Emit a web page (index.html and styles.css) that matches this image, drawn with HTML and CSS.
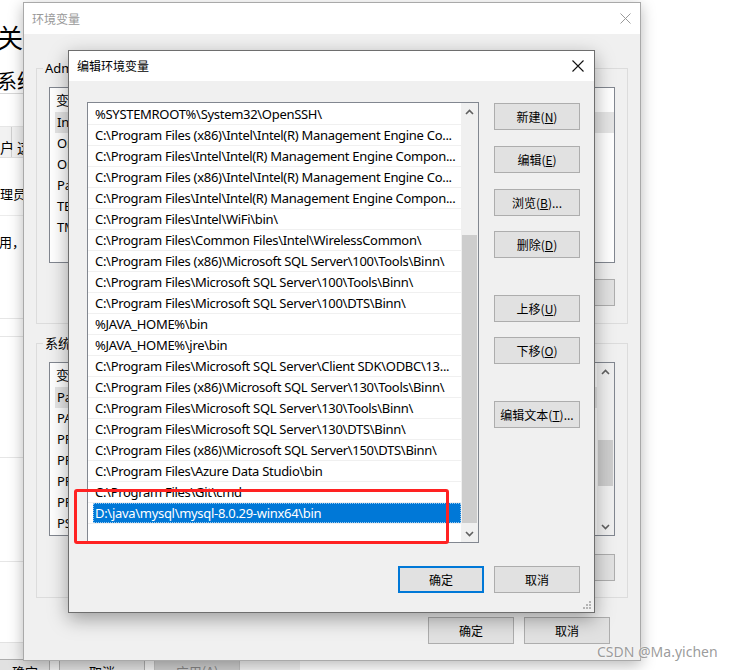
FILE: index.html
```html
<!DOCTYPE html>
<html lang="zh-CN">
<head>
<meta charset="utf-8">
<title>编辑环境变量</title>
<link rel="stylesheet" href="styles.css">
</head>
<body>
<div class="desk">

  <!-- background settings page -->
  <div class="page">
    <div class="pg-title">关于</div>
    <div class="pg-sub">系统</div>
    <div class="pg-tabs"><span class="tab t1">用户</span><span class="tab t2">这</span></div>
    <div class="pg-line1">管理员登录</div>
    <div class="pg-para">使用，以</div>
    <div class="pg-sep s1"></div>
    <div class="pg-sep s2"></div>
    <div class="pg-sep s3"></div>
    <div class="pg-sep s4"></div>
    <div class="pg-foot"></div>
    <div class="pg-btns">
      <span class="pbtn pb1">确定</span><span class="pbtn pb2">取消</span><span class="pbtn pb3">应用(A)</span>
    </div>
  </div>

  <!-- outer dialog -->
  <div class="win outer">
    <div class="titlebar inactive">
      <span class="ttl">环境变量</span>
      <svg class="close" width="11" height="11" viewBox="0 0 11 11"><path d="M0.5 0.5L10.5 10.5M10.5 0.5L0.5 10.5" stroke="#9a9a9a" stroke-width="1"/></svg>
    </div>
    <div class="obody">
      <fieldset class="grp g1">
        <legend>Administrator 的用户变量(U)</legend>
        <div class="olist l1">
          <div class="ohead">变量</div>
          <div class="orow hl">IntelliJ IDEA</div>
          <div class="orow">OneDrive</div>
          <div class="orow">OneDriveConsumer</div>
          <div class="orow">Path</div>
          <div class="orow">TEMP</div>
          <div class="orow">TMP</div>
        </div>
        <div class="obtns"><span class="btn">新建(N)...</span><span class="btn">编辑(E)...</span><span class="btn">删除(D)</span></div>
      </fieldset>
      <fieldset class="grp g2">
        <legend>系统变量(S)</legend>
        <div class="olist l2">
          <div class="ocol">
            <div class="ohead">变量</div>
            <div class="orow hl">Path</div>
            <div class="orow">PATHEXT</div>
            <div class="orow">PROCESSOR_ARCHITECTURE</div>
            <div class="orow">PROCESSOR_IDENTIFIER</div>
            <div class="orow">PROCESSOR_LEVEL</div>
            <div class="orow">PROCESSOR_REVISION</div>
            <div class="orow">PSModulePath</div>
          </div>
          <div class="vscroll sb2">
            <div class="arrow"><svg width="9" height="6" viewBox="0 0 9 6"><path d="M1 5L4.5 1.5L8 5" fill="none" stroke="#606060" stroke-width="1.6"/></svg></div>
            <div class="track"><div class="thumb"></div></div>
            <div class="arrow"><svg width="9" height="6" viewBox="0 0 9 6"><path d="M1 1L4.5 4.5L8 1" fill="none" stroke="#606060" stroke-width="1.6"/></svg></div>
          </div>
        </div>
        <div class="obtns"><span class="btn">新建(W)...</span><span class="btn">编辑(I)...</span><span class="btn">删除(L)</span></div>
      </fieldset>
      <div class="ofoot"><span class="btn fb">确定</span><span class="btn fb">取消</span></div>
    </div>
  </div>

  <!-- inner dialog -->
  <div class="win inner">
    <div class="titlebar">
      <span class="ttl">编辑环境变量</span>
      <svg class="close" width="12" height="12" viewBox="0 0 12 12"><path d="M0.5 0.5L11.5 11.5M11.5 0.5L0.5 11.5" stroke="#111" stroke-width="1.1"/></svg>
    </div>
    <div class="ibody">
      <div class="imain">
        <div class="ilist">
          <div class="irows">
            <div class="irow"><span class="cell">%SYSTEMROOT%\System32\OpenSSH\</span></div>
            <div class="irow"><span class="cell">C:\Program Files (x86)\Intel\Intel(R) Management Engine Co...</span></div>
            <div class="irow"><span class="cell">C:\Program Files\Intel\Intel(R) Management Engine Compon...</span></div>
            <div class="irow"><span class="cell">C:\Program Files (x86)\Intel\Intel(R) Management Engine Co...</span></div>
            <div class="irow"><span class="cell">C:\Program Files\Intel\Intel(R) Management Engine Compon...</span></div>
            <div class="irow"><span class="cell">C:\Program Files\Intel\WiFi\bin\</span></div>
            <div class="irow"><span class="cell">C:\Program Files\Common Files\Intel\WirelessCommon\</span></div>
            <div class="irow"><span class="cell">C:\Program Files (x86)\Microsoft SQL Server\100\Tools\Binn\</span></div>
            <div class="irow"><span class="cell">C:\Program Files\Microsoft SQL Server\100\Tools\Binn\</span></div>
            <div class="irow"><span class="cell">C:\Program Files\Microsoft SQL Server\100\DTS\Binn\</span></div>
            <div class="irow"><span class="cell">%JAVA_HOME%\bin</span></div>
            <div class="irow"><span class="cell">%JAVA_HOME%\jre\bin</span></div>
            <div class="irow"><span class="cell">C:\Program Files\Microsoft SQL Server\Client SDK\ODBC\13...</span></div>
            <div class="irow"><span class="cell">C:\Program Files (x86)\Microsoft SQL Server\130\Tools\Binn\</span></div>
            <div class="irow"><span class="cell">C:\Program Files\Microsoft SQL Server\130\Tools\Binn\</span></div>
            <div class="irow"><span class="cell">C:\Program Files\Microsoft SQL Server\130\DTS\Binn\</span></div>
            <div class="irow"><span class="cell">C:\Program Files (x86)\Microsoft SQL Server\150\DTS\Binn\</span></div>
            <div class="irow"><span class="cell">C:\Program Files\Azure Data Studio\bin</span></div>
            <div class="irow"><span class="cell">C:\Program Files\Git\cmd</span></div>
            <div class="irow sel"><span class="cell">D:\java\mysql\mysql-8.0.29-winx64\bin</span></div>
          </div>
          <div class="vscroll sb1">
            <div class="arrow"><svg width="9" height="6" viewBox="0 0 9 6"><path d="M1 5L4.5 1.5L8 5" fill="none" stroke="#606060" stroke-width="1.6"/></svg></div>
            <div class="track"><div class="thumb"></div></div>
            <div class="arrow"><svg width="9" height="6" viewBox="0 0 9 6"><path d="M1 1L4.5 4.5L8 1" fill="none" stroke="#606060" stroke-width="1.6"/></svg></div>
          </div>
        </div>
        <div class="ibtns">
          <span class="btn b-new">新建(<u>N</u>)</span>
          <span class="btn b-edit">编辑(<u>E</u>)</span>
          <span class="btn b-browse">浏览(<u>B</u>)...</span>
          <span class="btn b-del">删除(<u>D</u>)</span>
          <span class="btn b-up">上移(<u>U</u>)</span>
          <span class="btn b-down">下移(<u>O</u>)</span>
          <span class="btn b-text">编辑文本(<u>T</u>)...</span>
        </div>
      </div>
      <div class="ifoot"><span class="btn fb ok">确定</span><span class="btn fb">取消</span></div>
    </div>
    <svg class="grip" width="9" height="9" viewBox="0 0 9 9" fill="#b4b4b4"><rect x="6" y="0" width="2" height="2"/><rect x="3" y="3" width="2" height="2"/><rect x="6" y="3" width="2" height="2"/><rect x="0" y="6" width="2" height="2"/><rect x="3" y="6" width="2" height="2"/><rect x="6" y="6" width="2" height="2"/></svg>
  </div>

  <div class="redbox"></div>
  <div class="watermark">CSDN @Ma.yichen</div>
</div>
</body>
</html>
```
FILE: styles.css
```css
* { box-sizing: border-box; }
html, body { margin: 0; padding: 0; }
body {
  width: 733px; height: 670px; overflow: hidden; background: #fff;
  font-family: "Noto Sans", "Noto Sans CJK SC", sans-serif;
  font-size: 13px; color: #000;
}
.desk { position: relative; width: 733px; height: 670px; overflow: hidden; }

/* background page */
.page {
  position: absolute; left: 0; top: 0; width: 300px; height: 670px;
  background: #fff; font-family: "Noto Sans CJK SC", sans-serif;
}
.pg-title { margin-left: -3px; padding-top: 20px; height: 54px; font-size: 26px; line-height: 34px; white-space: nowrap; }
.pg-sub { margin-left: -3px; margin-top: 14px; height: 26px; font-size: 20px; line-height: 26px; white-space: nowrap; border-bottom: 1px solid #d8d8d8; }
.pg-tabs { margin-top: 32px; height: 32px; background: #f2f2f2; border-top: 1px solid #e6e6e6; border-bottom: 1px solid #e0e0e0; font-size: 14px; line-height: 40px; white-space: nowrap; display: flex; }
.tab { display: block; }
.t1 { margin-left: -14px; padding-right: 4px; border-right: 1px solid #d0d0d0; width: 26px; }
.t2 { padding-left: 5px; }
.pg-line1 { margin-left: -13px; margin-top: 27px; font-size: 13px; line-height: 18px; white-space: nowrap; }
.pg-para { margin-left: -14px; margin-top: 12px; font-size: 13px; line-height: 18px; white-space: nowrap; border-top: 1px solid #ececec; padding-top: 17px; }
.pg-sep { border-top: 1px solid #e6e6e6; }
.s1 { margin-top: 67px; }
.s2 { margin-top: 17px; }
.s3 { margin-top: 120px; }
.s4 { margin-top: 103px; }
.pg-foot { margin-top: 80px; height: 17px; background: #f3f3f3; border-top: 1px solid #e2e2e2; }
.pg-btns { display: flex; height: 26px; background: #f0f0f0; font-size: 13px; }
.pbtn { display: block; height: 26px; line-height: 24px; text-align: center; background: #e1e1e1; border: 1px solid #adadad; border-bottom: none; }
.pb1 { width: 68px; margin-left: -18px; padding-left: 18px; }
.pb2 { width: 86px; margin-left: 9px; }
.pb3 { width: 86px; margin-left: 9px; background: #cccccc; border-color: #bfbfbf; color: #838383; }

/* windows */
.win { position: absolute; background: #f0f0f0; font-family: "Noto Sans CJK SC", sans-serif; font-size: 12px; }
.outer { left: 23px; top: 2px; width: 618px; height: 659px; border: 1px solid #a9a9a9; box-shadow: 0 4px 14px rgba(0,0,0,0.28); }
.inner { left: 68px; top: 50px; width: 527px; height: 563px; border: 1px solid #6e6e6e; box-shadow: 0 6px 18px rgba(0,0,0,0.35); }
.titlebar { height: 30px; background: #fff; display: flex; align-items: center; justify-content: space-between; padding: 0 9px 0 8px; }
.outer .titlebar { height: 31px; }
.inactive .ttl { color: #999; }
.ttl { font-size: 12px; line-height: 16px; }
.inner .close { margin-right: 1px; }

.btn {
  display: flex; align-items: center; justify-content: center;
  height: 27px; background: #e1e1e1; border: 1px solid #adadad;
  font-size: 12px; line-height: 16px; white-space: nowrap; color: #000;
}
.btn u { text-decoration: underline; text-underline-offset: 1px; }

/* outer body */
.obody { padding: 26px 12px 0 12px; }
.grp { margin: 0; border: 1px solid #dcdcdc; padding: 11px 12px 17px 12px; min-width: 0; }
.grp legend { font-size: 13px; line-height: 16px; padding: 0 2px; margin-left: -6px; white-space: nowrap; font-family: "Noto Sans", "Noto Sans CJK SC", sans-serif; }
.g2 { margin-top: 11px; padding-bottom: 16px; }
.olist { background: #fff; border: 1px solid #828790; font-family: "Noto Sans", "Noto Sans CJK SC", sans-serif; font-size: 13px; letter-spacing: -0.2px; overflow: hidden; }
.l1 { height: 176px; }
.l2 { height: 174px; display: flex; }
.ocol { flex: 1; min-width: 0; }
.ohead { height: 23px; line-height: 23px; padding-left: 6px; margin-top: 1px; }
.orow { height: 21px; line-height: 21px; margin-left: 5px; padding-left: 2px; white-space: nowrap; }
.orow.hl { background: #e5e5e5; }
.obtns { display: flex; justify-content: flex-end; gap: 10px; margin-top: 16px; }
.obtns .btn { width: 86px; }
.g2 .obtns { margin-top: 18px; }
.ofoot { display: flex; justify-content: flex-end; gap: 10px; margin-top: 19px; padding-right: 18px; }
.fb { width: 86px; height: 27px; }

/* inner body */
.ibody { padding: 21px 14px 0 18px; }
.imain { display: flex; gap: 15px; }
.ilist { width: 392px; height: 441px; background: #fff; border: 1px solid #828790; display: flex; font-family: "Noto Sans", "Noto Sans CJK SC", sans-serif; font-size: 13px; letter-spacing: -0.3px; }
.irows { flex: 1; min-width: 0; padding-top: 1px; }
.irow { height: 21px; border-bottom: 1px solid #f0f0f0; padding-left: 5px; display: flex; }
.cell { flex: 1; min-width: 0; padding-left: 2px; line-height: 20px; white-space: nowrap; overflow: hidden; }
.irow.sel .cell { background: #0078d7; color: #fff; outline: 1px dotted #99c9ef; outline-offset: -1px; }

.vscroll { width: 17px; background: #f0f0f0; display: flex; flex-direction: column; }
.arrow { height: 17px; display: flex; align-items: center; justify-content: center; }
.track { flex: 1; }
.thumb { width: 15px; margin: 0 auto; background: #cdcdcd; }
.sb1 .thumb { margin-top: 115px; height: 288px; }
.sb2 .thumb { margin-top: 60px; height: 46px; }

.ibtns { width: 86px; display: flex; flex-direction: column; }
.b-new { margin-top: 1px; }
.b-edit { margin-top: 16px; }
.b-browse { margin-top: 16px; }
.b-del { margin-top: 15px; }
.b-up { margin-top: 37px; }
.b-down { margin-top: 15px; }
.b-text { margin-top: 37px; }
.ifoot { display: flex; justify-content: flex-end; gap: 10px; margin-top: 23px; }
.ok { border: 2px solid #0078d7; }
.grip { position: absolute; right: 2px; bottom: 2px; }

.redbox { position: absolute; left: 74px; top: 489px; width: 375px; height: 55px; border: 3px solid #ff2222; border-radius: 3px; }
.watermark { position: absolute; left: 597px; top: 643px; font-family: "Noto Sans", sans-serif; font-size: 14px; line-height: 18px; color: rgba(130,130,130,0.8); text-shadow: 0 0 2px #fff; white-space: nowrap; }
```
